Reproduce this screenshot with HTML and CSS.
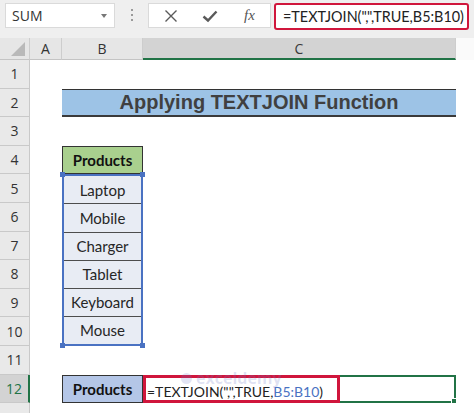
FILE: index.html
```html
<!DOCTYPE html>
<html lang="en">
<head>
    <meta charset="UTF-8">
    <title>Applying TEXTJOIN Function</title>
    <link rel="stylesheet" href="styles.css">
</head>
<body>
    <!-- formula bar -->
    <div class="formula-bar">
        <div class="name-box">
            <span>SUM</span>
            <span class="caret"></span>
        </div>
        <div class="grip"><i></i><i></i><i></i></div>
        <div class="fx-buttons">
            <svg class="icon" width="14" height="14" viewBox="0 0 14 14">
                <path d="M1.5 1.5 L12.5 12.5 M12.5 1.5 L1.5 12.5" stroke="#5a5a5a" stroke-width="1.4" fill="none"/>
            </svg>
            <svg class="icon" width="16" height="14" viewBox="0 0 16 14">
                <path d="M1.5 7.5 L6 11.5 L14.5 2.5" stroke="#5a5a5a" stroke-width="2.4" fill="none"/>
            </svg>
            <span class="fx">fx</span>
        </div>
        <div class="formula-input">=TEXTJOIN(",",TRUE,B5:B10)</div>
    </div>

    <!-- worksheet -->
    <div class="sheet">
        <div class="corner"></div>
        <div class="col-head">A</div>
        <div class="col-head">B</div>
        <div class="col-head selected">C</div>
        <div class="col-head blank"></div>

        <div class="row-head">1</div><div></div><div></div><div></div><div></div>

        <div class="row-head">2</div><div></div>
        <div class="title">Applying TEXTJOIN Function</div>
        <div></div>

        <div class="row-head">3</div><div></div><div></div><div></div><div></div>

        <div class="row-head">4</div><div></div>
        <div class="products-head">Products</div>
        <div></div><div></div>

        <div class="products-list">
            <div class="item">Laptop</div>
            <div class="item">Mobile</div>
            <div class="item">Charger</div>
            <div class="item">Tablet</div>
            <div class="item">Keyboard</div>
            <div class="item">Mouse</div>
            <span class="handle tl"></span>
            <span class="handle tr"></span>
            <span class="handle bl"></span>
            <span class="handle br"></span>
        </div>

        <div class="row-head">5</div><div></div><div></div><div></div>
        <div class="row-head">6</div><div></div><div></div><div></div>
        <div class="row-head">7</div><div></div><div></div><div></div>
        <div class="row-head">8</div><div></div><div></div><div></div>
        <div class="row-head">9</div><div></div><div></div><div></div>
        <div class="row-head">10</div><div></div><div></div><div></div>

        <div class="row-head">11</div><div></div><div></div><div></div><div></div>

        <div class="row-head selected">12</div><div></div>
        <div class="result-label">Products</div>
        <div class="active-cell">
            <div class="formula-cell">=TEXTJOIN(",",TRUE,<span class="ref">B5:B10</span>)</div>
            <div class="watermark"><span class="logo"></span>exceldemy</div>
            <span class="fill-handle"></span>
        </div>
        <div></div>

        <div class="row-head rest"></div>
    </div>
</body>
</html>
```

FILE: styles.css
```css
body {
    margin: 0;
    padding: 0;
    width: 474px;
    height: 413px;
    overflow: hidden;
    background-color: #fff;
    font-family: Lato, "Noto Sans", sans-serif;
    color: #222;
}

/* ---------- formula bar ---------- */

.formula-bar {
    display: flex;
    align-items: flex-start;
    height: 38px;
    padding: 3px 0 0 5px;
    box-sizing: border-box;
    background-color: #efefef;
}

.name-box {
    display: flex;
    align-items: center;
    justify-content: space-between;
    width: 110px;
    height: 25px;
    padding: 0 7px 0 6px;
    box-sizing: border-box;
    background-color: #fff;
    border: 1px solid #dadada;
    font-family: "Open Sans", sans-serif;
    font-size: 14px;
    color: #333;
}

.caret {
    width: 0;
    height: 0;
    border-left: 3.5px solid transparent;
    border-right: 3.5px solid transparent;
    border-top: 4px solid #777;
}

.grip {
    display: flex;
    flex-direction: column;
    gap: 3px;
    width: 33px;
    align-items: center;
    padding-top: 6px;
}

.grip i {
    display: block;
    width: 2px;
    height: 2px;
    background-color: #9a9a9a;
}

.fx-buttons {
    display: flex;
    align-items: center;
    gap: 24px;
    width: 123px;
    height: 25px;
    padding-left: 15px;
    box-sizing: border-box;
    background-color: #fff;
    border: 1px solid #dadada;
}

.fx {
    font-family: "Liberation Serif", serif;
    font-style: italic;
    font-size: 15px;
    color: #555;
    margin-left: 2px;
}

.formula-input {
    width: 195px;
    height: 27px;
    margin-left: 3px;
    padding-left: 7px;
    box-sizing: border-box;
    background-color: #fff;
    border: 2px solid #d0163c;
    border-radius: 3px;
    font-size: 14.4px;
    line-height: 23px;
    color: #222;
    white-space: nowrap;
}

/* ---------- sheet grid ---------- */

.sheet {
    display: grid;
    grid-template-columns: 30px 32px 81px 313px 1fr;
    grid-template-rows: 22px repeat(12, 28.6px) 1fr;
    height: 375px;
}

.corner {
    position: relative;
    background-color: #e6e6e6;
    border-right: 1px solid #cdcdcd;
    border-bottom: 1px solid #c4c4c4;
}

.corner::after {
    content: "";
    position: absolute;
    right: 4px;
    bottom: 3px;
    width: 14px;
    height: 14px;
    background-color: #b9b9b9;
    clip-path: polygon(100% 0, 100% 100%, 0 100%);
}

.col-head {
    display: flex;
    align-items: center;
    justify-content: center;
    background-color: #e6e6e6;
    border-right: 1px solid #cdcdcd;
    border-bottom: 1px solid #c4c4c4;
    font-family: "Open Sans", sans-serif;
    font-size: 14px;
    color: #333;
}

.col-head.selected {
    background-color: #d3d3d3;
    border-bottom: 2px solid #217346;
    color: #3a3a3a;
}

.col-head.blank {
    background-color: #fafafa;
    border: none;
}

.row-head {
    display: flex;
    align-items: center;
    justify-content: center;
    background-color: #e9e9e9;
    border-right: 1px solid #c9c9c9;
    border-bottom: 1px solid #c9c9c9;
    font-family: "Open Sans", sans-serif;
    font-size: 14px;
    color: #333;
}

.row-head.selected {
    background-color: #d3d3d3;
    border-right: 2px solid #217346;
    color: #217346;
}

.row-head.rest {
    border-bottom: none;
}

/* ---------- cells ---------- */

.title {
    grid-column: span 2;
    display: flex;
    align-items: center;
    justify-content: center;
    background-color: #9dc3e6;
    border-top: 1px solid #333;
    border-bottom: 2px solid #3a3a3a;
    font-family: "Liberation Sans", Arial, sans-serif;
    font-weight: bold;
    font-size: 20px;
    color: #404040;
}

.products-head,
.result-label {
    display: flex;
    align-items: center;
    justify-content: center;
    border: 1px solid #333;
    font-weight: bold;
    font-size: 15px;
    color: #111;
}

.products-head {
    background-color: #a9d08e;
}

.result-label {
    background-color: #b4c6e7;
}

.products-list {
    grid-column: 3;
    grid-row: 6 / span 6;
    position: relative;
    display: flex;
    flex-direction: column;
    border: 2px solid #4a72c2;
    background-color: #e8ecf4;
}

.item {
    flex: 1;
    display: flex;
    align-items: center;
    justify-content: center;
    border-bottom: 1px solid #4d4d4d;
    font-size: 15px;
    color: #262626;
}

.item:last-of-type {
    border-bottom: none;
}

.handle {
    position: absolute;
    width: 5px;
    height: 5px;
    background-color: #4a72c2;
}

.handle.tl { left: -4px; top: -4px; }
.handle.tr { right: -4px; top: -4px; }
.handle.bl { left: -4px; bottom: -4px; }
.handle.br { right: -4px; bottom: -4px; }

.active-cell {
    position: relative;
    display: flex;
    border: 2px solid #217346;
    border-left: none;
}

.formula-cell {
    width: 197px;
    box-sizing: border-box;
    padding: 5px 0 0 1px;
    display: flex;
    align-items: center;
    border: 3px solid #d0163c;
    margin: -2px 0;
    font-size: 14px;
    white-space: nowrap;
    color: #222;
}

.ref {
    color: #4a72c2;
}

/* faint site watermark over the cell */
.watermark {
    position: absolute;
    left: 38px;
    top: -6px;
    display: flex;
    align-items: center;
    gap: 4px;
    height: 15px;
    line-height: 15px;
    font-family: "Open Sans", sans-serif;
    font-weight: bold;
    font-size: 16px;
    color: rgba(110, 120, 200, 0.22);
    pointer-events: none;
}

.logo {
    width: 11px;
    height: 11px;
    border-radius: 50%;
    background-color: rgba(110, 120, 200, 0.2);
}

.fill-handle {
    position: absolute;
    right: -3px;
    bottom: -3px;
    width: 4px;
    height: 4px;
    background-color: #217346;
    border: 1px solid #fff;
}
```
